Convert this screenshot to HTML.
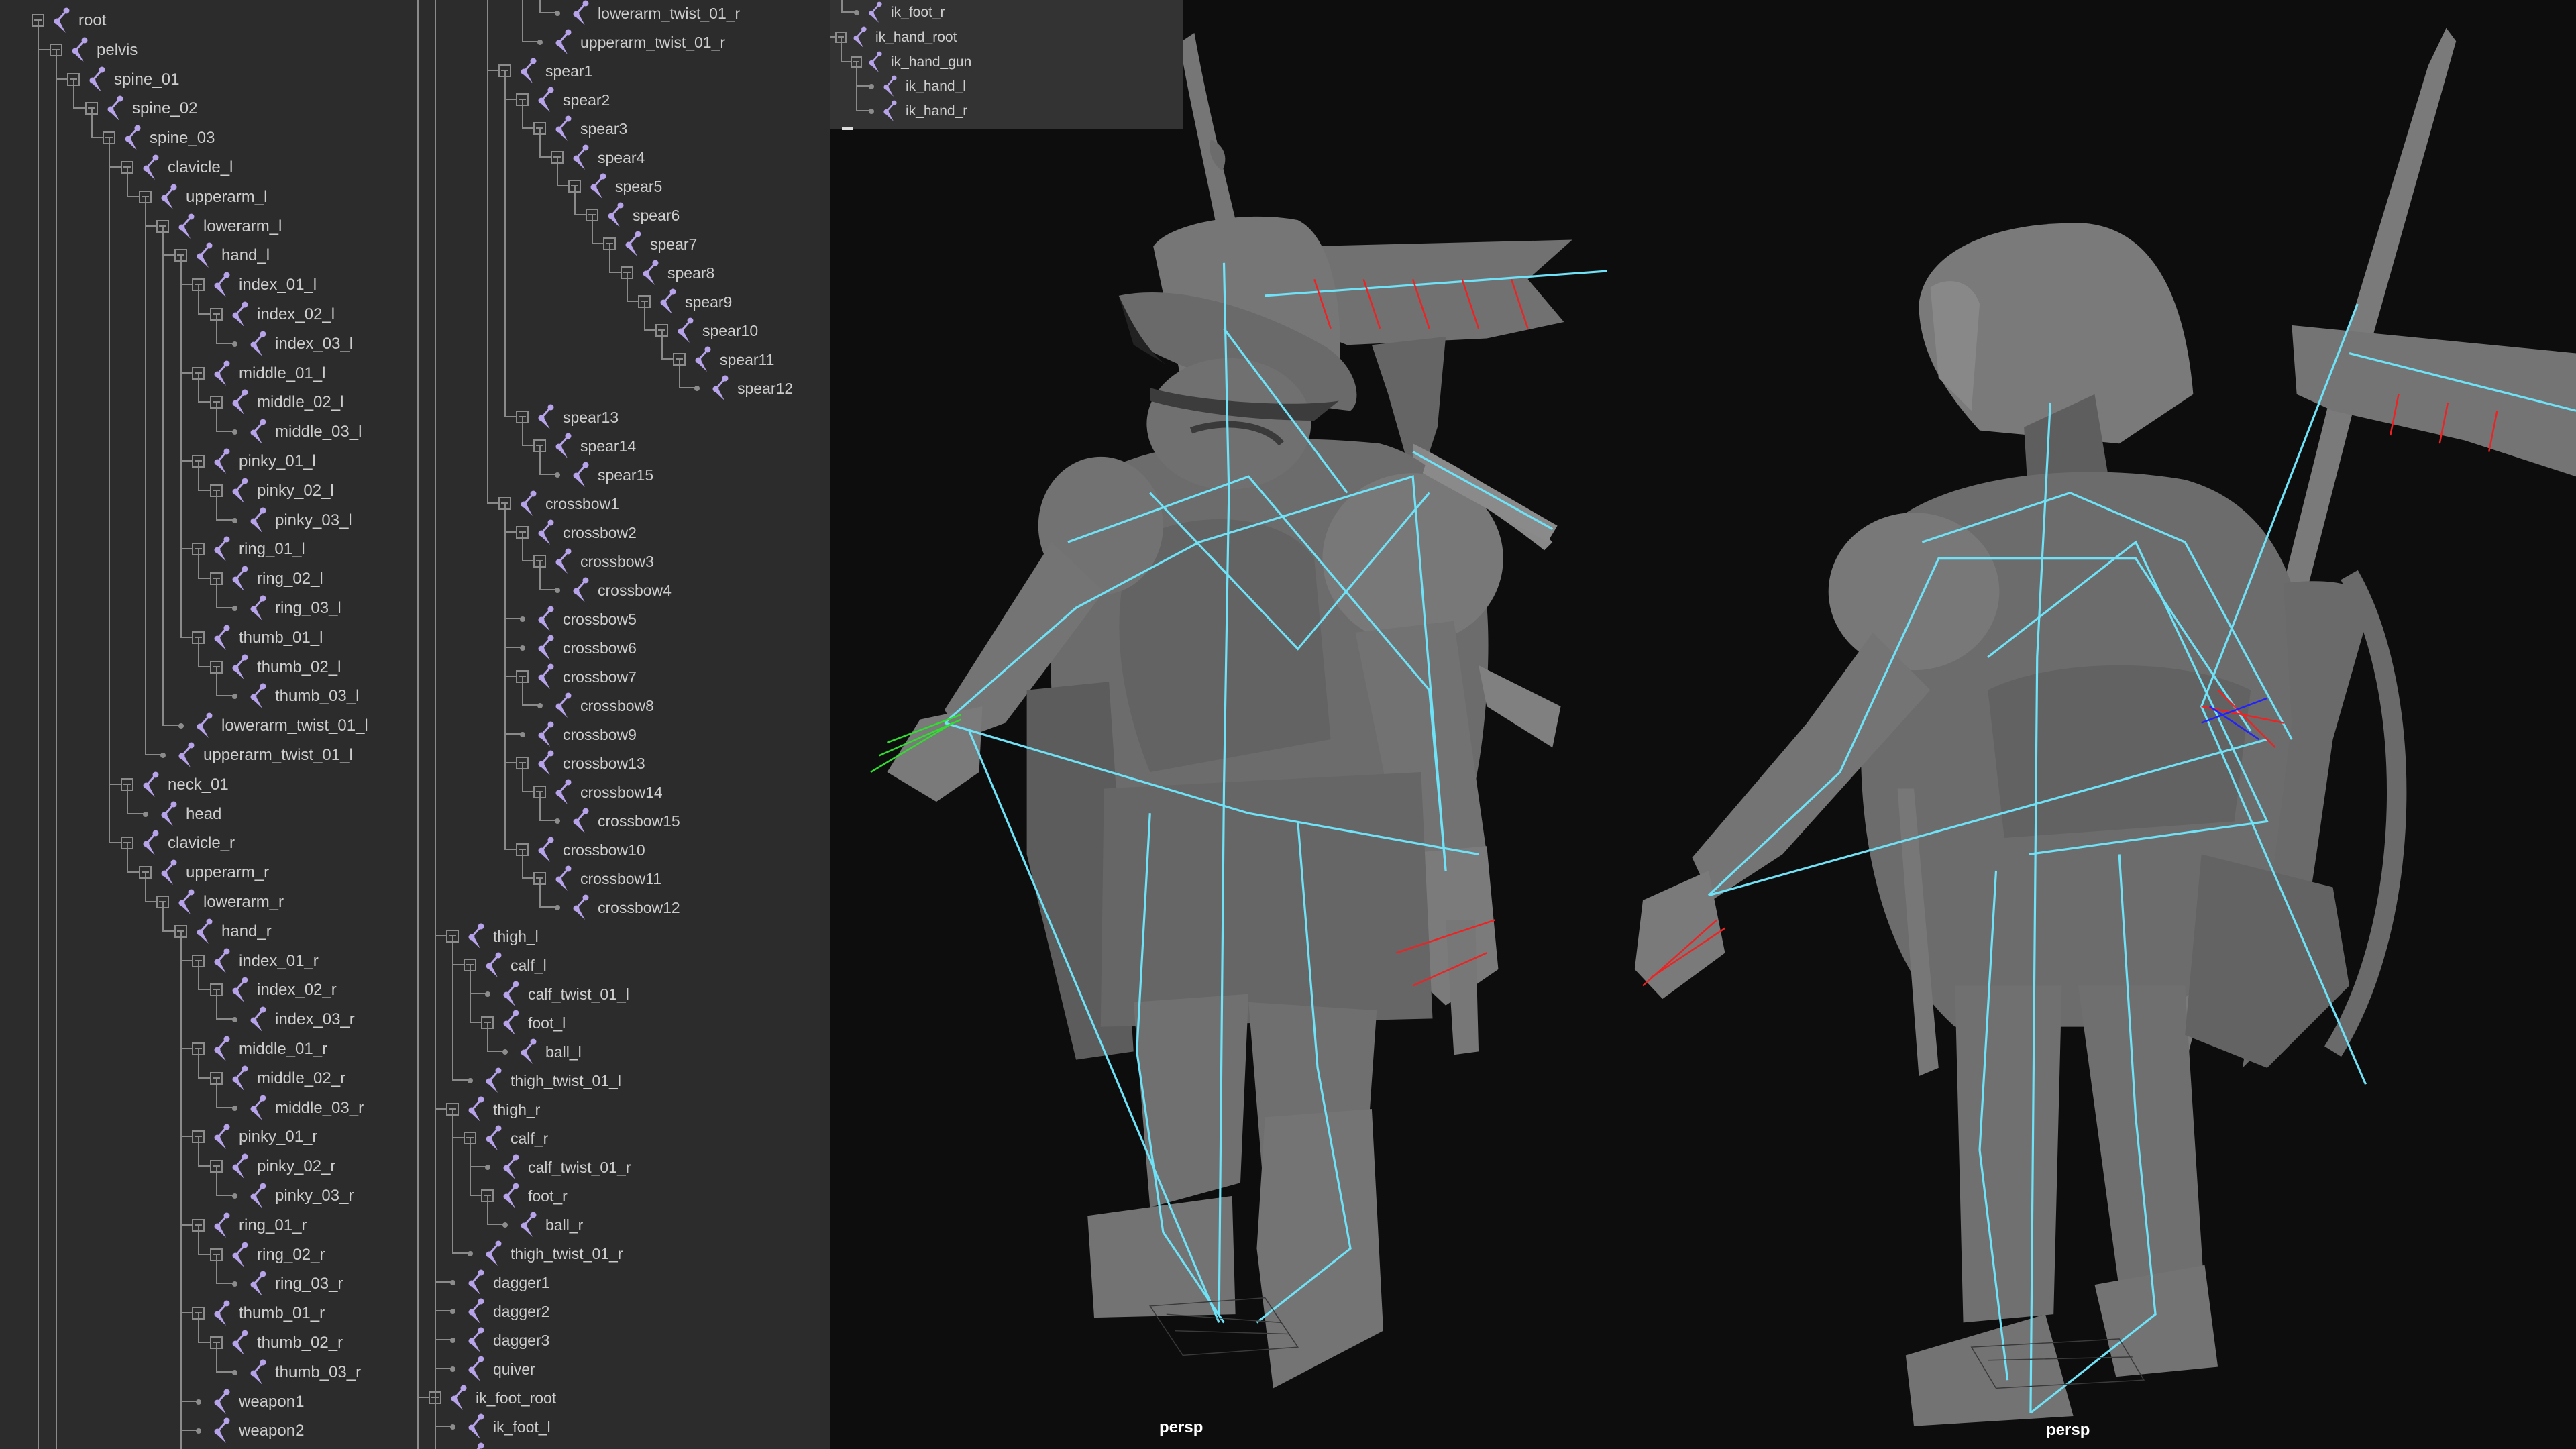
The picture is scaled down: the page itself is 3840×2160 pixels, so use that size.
<!DOCTYPE html>
<html><head><meta charset="utf-8">
<style>
html,body{margin:0;padding:0;width:3840px;height:2160px;overflow:hidden;background:#0d0d0d;font-family:"Liberation Sans",sans-serif}
#scene{position:absolute;left:0;top:0;width:3840px;height:2160px}
.panel{position:absolute;background:#2c2c2c;overflow:hidden}
#p1{left:0;top:0;width:1237px;height:2160px}
#p3{left:1237px;top:0;width:526px;height:193px;background:#333}
.r{position:absolute;height:44px;white-space:nowrap;color:#cdcdcd;font-size:23px;line-height:44px}
.r .b{position:absolute;left:0;top:12px;width:15px;height:15px;border:2px solid #8c8c8c;box-sizing:content-box}
.r .b:after{content:"";position:absolute;left:2px;right:2px;top:6px;height:2px;background:#8c8c8c}
.r .d{position:absolute;left:6px;top:18px;width:8px;height:8px;border-radius:50%;background:#8c8c8c}
.r svg{position:absolute;left:33px;top:1px;width:24px;height:40px}
.r span{position:absolute;left:70px;top:0}
.c1{font-size:24px}
.c3{height:37px;line-height:37px;font-size:21px}
.c3 .b{top:10px;width:13px;height:13px}
.c3 .b:after{top:5px}
.c3 .d{top:15px;left:5px}
.c3 svg{left:27px;top:1px;width:20px;height:34px}
.c3 span{left:60px}
.ln{position:absolute;background:#8a8a8a}
.persp{position:absolute;color:#fff;font-weight:bold;font-size:24px;font-family:"Liberation Sans",sans-serif}
</style></head><body>
<svg width="0" height="0" style="position:absolute">
<defs><symbol id="jt" viewBox="0 0 24 40">
<circle cx="19" cy="6" r="4.5" fill="#b7a3ea"/>
<path d="M19,6 L5,22" stroke="#b7a3ea" stroke-width="3"/>
<circle cx="5" cy="22" r="4.5" fill="#b7a3ea"/>
<path d="M2,24 L8,20 L18,39 Z" fill="#b7a3ea"/>
</symbol></defs></svg>

<svg id="scene" viewBox="0 0 1568 882" preserveAspectRatio="none">
<rect width="1568" height="882" fill="#0d0d0d"/>
<!-- LEFT CHARACTER -->
<g fill="#6c6c6c">
<path d="M718,26 L727,20 C734,60 744,100 754,142 L742,146 C734,104 724,62 718,26Z" fill="#767676"/>
<path d="M737,85 C745,88 748,96 744,104 C738,100 735,92 737,85Z"/>
<path d="M793,150 L957,146 L930,170 L952,196 L905,206 L820,210 L795,200Z" fill="#717171"/>
<path d="M835,210 L880,205 L875,260 L862,300 L845,240Z" fill="#656565"/>
<path d="M860,270 C890,285 915,300 935,320 L945,330 L940,335 C915,315 885,295 860,285Z" fill="#888"/>
<path d="M655,300 C680,270 760,262 840,270 C895,285 910,340 905,420 C900,500 880,560 820,600 L690,610 C660,570 640,500 640,420 C638,360 640,320 655,300Z"/>
<path d="M690,330 C720,310 780,310 800,340 L810,450 L700,470 C680,420 675,370 690,330Z" fill="#636363"/>
<ellipse cx="670" cy="320" rx="38" ry="42" fill="#727272"/>
<ellipse cx="860" cy="340" rx="55" ry="52" fill="#787878"/>
<path d="M640,330 L672,360 L612,440 L585,450 L575,432 Z" fill="#747474"/>
<path d="M560,438 L598,430 L596,470 L570,488 L540,470Z" fill="#7a7a7a"/>
<path d="M625,420 L675,415 L690,640 L655,645 L625,520Z" fill="#5c5c5c"/>
<path d="M825,385 L885,378 L905,520 L855,532Z" fill="#727272"/>
<path d="M850,520 L905,515 L912,590 L880,612 L846,580Z" fill="#7b7b7b"/>
<path d="M880,560 L898,560 L900,640 L885,642Z" fill="#777"/>
<path d="M900,405 L950,430 L945,455 L905,430Z" fill="#808080"/>
<path d="M672,480 L865,470 L872,620 L670,625Z" fill="#666"/>
<path d="M690,610 L760,605 L755,720 L700,735Z" fill="#707070"/>
<path d="M662,740 L750,728 L752,800 L666,802Z" fill="#737373"/>
<path d="M760,610 L838,615 L830,730 L770,735Z" fill="#6f6f6f"/>
<path d="M770,680 L835,675 L842,810 L775,845 L765,760Z" fill="#747474"/>
<path d="M702,150 C712,135 760,128 790,134 C812,145 818,190 815,230 L720,236Z" fill="#767676"/>
<path d="M681,180 C720,172 770,190 805,210 C826,222 830,244 822,250 C780,246 720,226 690,208 Z" fill="#6a6a6a"/>
<path d="M681,180 C690,200 700,215 710,222 L690,210Z" fill="#222"/>
<ellipse cx="748" cy="258" rx="50" ry="40" fill="#707070"/>
<path d="M700,236 C730,245 790,248 815,244 L800,256 C760,256 720,250 700,244Z" fill="#3c3c3c"/>
<path d="M725,262 C745,255 770,258 780,270" stroke="#3a3a3a" stroke-width="4" fill="none"/>
<path d="M870,275 L948,320 L942,330 L866,288Z" fill="#8a8a8a"/>
</g>
<!-- RIGHT CHARACTER -->
<g fill="#6c6c6c">
<path d="M1489,17 L1495,25 L1440,220 L1308,735 L1296,732 L1425,215 L1478,40Z" fill="#7a7a7a"/>
<path d="M1395,198 L1568,215 L1568,290 L1500,268 L1420,250 L1398,240Z" fill="#747474"/>
<path d="M1168,185 C1172,150 1220,134 1270,136 C1310,140 1330,180 1335,240 L1290,270 L1205,262 C1185,240 1168,215 1168,185Z" fill="#7a7a7a"/>
<path d="M1175,175 C1185,168 1200,170 1205,185 L1200,250 L1180,230Z" fill="#888"/>
<path d="M1232,260 L1275,240 L1285,300 L1255,330 L1235,310Z" fill="#5e5e5e"/>
<path d="M1140,330 C1170,290 1260,280 1330,292 C1395,310 1410,380 1402,450 C1395,530 1360,600 1300,625 L1190,625 C1150,590 1130,520 1133,440Z"/>
<path d="M1210,420 C1250,400 1330,400 1370,420 L1360,500 L1220,510Z" fill="#626262"/>
<ellipse cx="1165" cy="360" rx="52" ry="48" fill="#787878"/>
<path d="M1140,385 L1175,420 L1085,520 L1042,548 L1030,522 L1100,440Z" fill="#747474"/>
<path d="M1000,548 L1040,530 L1050,580 L1012,608 L995,590Z" fill="#7a7a7a"/>
<path d="M1155,480 L1165,480 L1180,650 L1168,655Z" fill="#777"/>
<path d="M1190,600 L1255,600 L1250,800 L1195,805Z" fill="#707070"/>
<path d="M1160,825 L1245,800 L1262,862 L1165,868Z" fill="#737373"/>
<path d="M1265,600 L1330,600 L1342,790 L1292,800Z" fill="#6f6f6f"/>
<path d="M1275,782 L1342,770 L1350,832 L1288,838Z" fill="#737373"/>
<path d="M1390,355 C1430,350 1450,360 1440,380 L1420,450 L1410,520 L1395,620 L1365,650 L1380,560 L1395,440Z" fill="#6a6a6a"/>
<path d="M1340,520 L1420,540 L1430,600 L1380,650 L1330,630Z" fill="#636363"/>
<path d="M1430,350 C1470,420 1470,560 1420,640" stroke="#6a6a6a" stroke-width="12" fill="none"/>
</g>
<!-- skeleton lines -->
<g stroke="#6fe2f7" stroke-width="1.3" fill="none">
<polyline points="745,160 748,300 745,480 742,800"/>
<polyline points="575,440 655,370 730,330 860,290 880,530"/>
<polyline points="590,445 742,805"/>
<polyline points="575,440 760,495 900,520"/>
<polyline points="700,495 692,640 708,750 745,805"/>
<polyline points="790,500 802,650 822,760 765,805"/>
<polyline points="770,180 978,165"/>
<polyline points="860,275 945,322"/>
<polyline points="700,300 790,395 870,300"/>
<polyline points="745,200 820,300"/>
<polyline points="650,330 760,290 870,420 880,530"/>
<polyline points="1248,245 1240,400 1236,860"/>
<polyline points="1040,545 1120,470 1180,340 1300,340 1370,445"/>
<polyline points="1435,185 1340,430 1440,660"/>
<polyline points="1215,530 1205,700 1222,840"/>
<polyline points="1290,520 1300,680 1312,800 1236,860"/>
<polyline points="1040,545 1380,450"/>
<polyline points="1430,215 1568,250"/>
<polyline points="1210,400 1300,330 1380,500 1235,520"/>
<polyline points="1170,330 1260,300 1330,330 1395,450"/>
</g>
<g stroke-width="1" fill="none">
<path d="M530,470 L580,440 M535,460 L585,438 M540,452 L585,435" stroke="#2ce02c"/>
<path d="M1000,600 L1045,560 M1005,595 L1050,565" stroke="#e22"/>
<path d="M1340,430 L1390,440 M1350,420 L1385,455" stroke="#e22"/>
<path d="M1340,440 L1380,425 M1345,430 L1375,450" stroke="#22f"/>
<path d="M850,580 L910,560 M860,600 L905,580" stroke="#e22"/>
<path d="M800,170 L810,200 M830,170 L840,200 M860,170 L870,200 M890,170 L900,200 M920,170 L930,200" stroke="#e22"/>
<path d="M1460,240 L1455,265 M1490,245 L1485,270 M1520,250 L1515,275" stroke="#e22"/>
</g>
<g stroke="#3a3a3a" stroke-width="0.6" fill="none">
<path d="M700,795 L770,790 L790,820 L720,825Z M710,800 L780,805 M715,810 L785,812"/>
<path d="M1200,820 L1290,815 L1305,840 L1215,845Z M1210,828 L1298,826"/>
</g>
</svg>

<div class="panel" id="p1">
<div class="r c1" style="left:47px;top:9px"><i class="b"></i><svg><use href="#jt"/></svg><span>root</span></div>
<div class="r c1" style="left:74px;top:53px"><i class="b"></i><svg><use href="#jt"/></svg><span>pelvis</span></div>
<div class="r c1" style="left:100px;top:97px"><i class="b"></i><svg><use href="#jt"/></svg><span>spine_01</span></div>
<div class="r c1" style="left:127px;top:140px"><i class="b"></i><svg><use href="#jt"/></svg><span>spine_02</span></div>
<div class="r c1" style="left:153px;top:184px"><i class="b"></i><svg><use href="#jt"/></svg><span>spine_03</span></div>
<div class="r c1" style="left:180px;top:228px"><i class="b"></i><svg><use href="#jt"/></svg><span>clavicle_l</span></div>
<div class="r c1" style="left:207px;top:272px"><i class="b"></i><svg><use href="#jt"/></svg><span>upperarm_l</span></div>
<div class="r c1" style="left:233px;top:316px"><i class="b"></i><svg><use href="#jt"/></svg><span>lowerarm_l</span></div>
<div class="r c1" style="left:260px;top:359px"><i class="b"></i><svg><use href="#jt"/></svg><span>hand_l</span></div>
<div class="r c1" style="left:286px;top:403px"><i class="b"></i><svg><use href="#jt"/></svg><span>index_01_l</span></div>
<div class="r c1" style="left:313px;top:447px"><i class="b"></i><svg><use href="#jt"/></svg><span>index_02_l</span></div>
<div class="r c1" style="left:340px;top:491px"><i class="d"></i><svg><use href="#jt"/></svg><span>index_03_l</span></div>
<div class="r c1" style="left:286px;top:535px"><i class="b"></i><svg><use href="#jt"/></svg><span>middle_01_l</span></div>
<div class="r c1" style="left:313px;top:578px"><i class="b"></i><svg><use href="#jt"/></svg><span>middle_02_l</span></div>
<div class="r c1" style="left:340px;top:622px"><i class="d"></i><svg><use href="#jt"/></svg><span>middle_03_l</span></div>
<div class="r c1" style="left:286px;top:666px"><i class="b"></i><svg><use href="#jt"/></svg><span>pinky_01_l</span></div>
<div class="r c1" style="left:313px;top:710px"><i class="b"></i><svg><use href="#jt"/></svg><span>pinky_02_l</span></div>
<div class="r c1" style="left:340px;top:754px"><i class="d"></i><svg><use href="#jt"/></svg><span>pinky_03_l</span></div>
<div class="r c1" style="left:286px;top:797px"><i class="b"></i><svg><use href="#jt"/></svg><span>ring_01_l</span></div>
<div class="r c1" style="left:313px;top:841px"><i class="b"></i><svg><use href="#jt"/></svg><span>ring_02_l</span></div>
<div class="r c1" style="left:340px;top:885px"><i class="d"></i><svg><use href="#jt"/></svg><span>ring_03_l</span></div>
<div class="r c1" style="left:286px;top:929px"><i class="b"></i><svg><use href="#jt"/></svg><span>thumb_01_l</span></div>
<div class="r c1" style="left:313px;top:973px"><i class="b"></i><svg><use href="#jt"/></svg><span>thumb_02_l</span></div>
<div class="r c1" style="left:340px;top:1016px"><i class="d"></i><svg><use href="#jt"/></svg><span>thumb_03_l</span></div>
<div class="r c1" style="left:260px;top:1060px"><i class="d"></i><svg><use href="#jt"/></svg><span>lowerarm_twist_01_l</span></div>
<div class="r c1" style="left:233px;top:1104px"><i class="d"></i><svg><use href="#jt"/></svg><span>upperarm_twist_01_l</span></div>
<div class="r c1" style="left:180px;top:1148px"><i class="b"></i><svg><use href="#jt"/></svg><span>neck_01</span></div>
<div class="r c1" style="left:207px;top:1192px"><i class="d"></i><svg><use href="#jt"/></svg><span>head</span></div>
<div class="r c1" style="left:180px;top:1235px"><i class="b"></i><svg><use href="#jt"/></svg><span>clavicle_r</span></div>
<div class="r c1" style="left:207px;top:1279px"><i class="b"></i><svg><use href="#jt"/></svg><span>upperarm_r</span></div>
<div class="r c1" style="left:233px;top:1323px"><i class="b"></i><svg><use href="#jt"/></svg><span>lowerarm_r</span></div>
<div class="r c1" style="left:260px;top:1367px"><i class="b"></i><svg><use href="#jt"/></svg><span>hand_r</span></div>
<div class="r c1" style="left:286px;top:1411px"><i class="b"></i><svg><use href="#jt"/></svg><span>index_01_r</span></div>
<div class="r c1" style="left:313px;top:1454px"><i class="b"></i><svg><use href="#jt"/></svg><span>index_02_r</span></div>
<div class="r c1" style="left:340px;top:1498px"><i class="d"></i><svg><use href="#jt"/></svg><span>index_03_r</span></div>
<div class="r c1" style="left:286px;top:1542px"><i class="b"></i><svg><use href="#jt"/></svg><span>middle_01_r</span></div>
<div class="r c1" style="left:313px;top:1586px"><i class="b"></i><svg><use href="#jt"/></svg><span>middle_02_r</span></div>
<div class="r c1" style="left:340px;top:1630px"><i class="d"></i><svg><use href="#jt"/></svg><span>middle_03_r</span></div>
<div class="r c1" style="left:286px;top:1673px"><i class="b"></i><svg><use href="#jt"/></svg><span>pinky_01_r</span></div>
<div class="r c1" style="left:313px;top:1717px"><i class="b"></i><svg><use href="#jt"/></svg><span>pinky_02_r</span></div>
<div class="r c1" style="left:340px;top:1761px"><i class="d"></i><svg><use href="#jt"/></svg><span>pinky_03_r</span></div>
<div class="r c1" style="left:286px;top:1805px"><i class="b"></i><svg><use href="#jt"/></svg><span>ring_01_r</span></div>
<div class="r c1" style="left:313px;top:1849px"><i class="b"></i><svg><use href="#jt"/></svg><span>ring_02_r</span></div>
<div class="r c1" style="left:340px;top:1892px"><i class="d"></i><svg><use href="#jt"/></svg><span>ring_03_r</span></div>
<div class="r c1" style="left:286px;top:1936px"><i class="b"></i><svg><use href="#jt"/></svg><span>thumb_01_r</span></div>
<div class="r c1" style="left:313px;top:1980px"><i class="b"></i><svg><use href="#jt"/></svg><span>thumb_02_r</span></div>
<div class="r c1" style="left:340px;top:2024px"><i class="d"></i><svg><use href="#jt"/></svg><span>thumb_03_r</span></div>
<div class="r c1" style="left:286px;top:2068px"><i class="d"></i><svg><use href="#jt"/></svg><span>weapon1</span></div>
<div class="r c1" style="left:286px;top:2111px"><i class="d"></i><svg><use href="#jt"/></svg><span>weapon2</span></div>
<div class="r c2" style="left:821px;top:-2px"><i class="d"></i><svg><use href="#jt"/></svg><span>lowerarm_twist_01_r</span></div>
<div class="r c2" style="left:795px;top:41px"><i class="d"></i><svg><use href="#jt"/></svg><span>upperarm_twist_01_r</span></div>
<div class="r c2" style="left:743px;top:84px"><i class="b"></i><svg><use href="#jt"/></svg><span>spear1</span></div>
<div class="r c2" style="left:769px;top:127px"><i class="b"></i><svg><use href="#jt"/></svg><span>spear2</span></div>
<div class="r c2" style="left:795px;top:170px"><i class="b"></i><svg><use href="#jt"/></svg><span>spear3</span></div>
<div class="r c2" style="left:821px;top:213px"><i class="b"></i><svg><use href="#jt"/></svg><span>spear4</span></div>
<div class="r c2" style="left:847px;top:256px"><i class="b"></i><svg><use href="#jt"/></svg><span>spear5</span></div>
<div class="r c2" style="left:873px;top:299px"><i class="b"></i><svg><use href="#jt"/></svg><span>spear6</span></div>
<div class="r c2" style="left:899px;top:342px"><i class="b"></i><svg><use href="#jt"/></svg><span>spear7</span></div>
<div class="r c2" style="left:925px;top:385px"><i class="b"></i><svg><use href="#jt"/></svg><span>spear8</span></div>
<div class="r c2" style="left:951px;top:428px"><i class="b"></i><svg><use href="#jt"/></svg><span>spear9</span></div>
<div class="r c2" style="left:977px;top:471px"><i class="b"></i><svg><use href="#jt"/></svg><span>spear10</span></div>
<div class="r c2" style="left:1003px;top:514px"><i class="b"></i><svg><use href="#jt"/></svg><span>spear11</span></div>
<div class="r c2" style="left:1029px;top:557px"><i class="d"></i><svg><use href="#jt"/></svg><span>spear12</span></div>
<div class="r c2" style="left:769px;top:600px"><i class="b"></i><svg><use href="#jt"/></svg><span>spear13</span></div>
<div class="r c2" style="left:795px;top:643px"><i class="b"></i><svg><use href="#jt"/></svg><span>spear14</span></div>
<div class="r c2" style="left:821px;top:686px"><i class="d"></i><svg><use href="#jt"/></svg><span>spear15</span></div>
<div class="r c2" style="left:743px;top:729px"><i class="b"></i><svg><use href="#jt"/></svg><span>crossbow1</span></div>
<div class="r c2" style="left:769px;top:772px"><i class="b"></i><svg><use href="#jt"/></svg><span>crossbow2</span></div>
<div class="r c2" style="left:795px;top:815px"><i class="b"></i><svg><use href="#jt"/></svg><span>crossbow3</span></div>
<div class="r c2" style="left:821px;top:858px"><i class="d"></i><svg><use href="#jt"/></svg><span>crossbow4</span></div>
<div class="r c2" style="left:769px;top:901px"><i class="d"></i><svg><use href="#jt"/></svg><span>crossbow5</span></div>
<div class="r c2" style="left:769px;top:944px"><i class="d"></i><svg><use href="#jt"/></svg><span>crossbow6</span></div>
<div class="r c2" style="left:769px;top:987px"><i class="b"></i><svg><use href="#jt"/></svg><span>crossbow7</span></div>
<div class="r c2" style="left:795px;top:1030px"><i class="d"></i><svg><use href="#jt"/></svg><span>crossbow8</span></div>
<div class="r c2" style="left:769px;top:1073px"><i class="d"></i><svg><use href="#jt"/></svg><span>crossbow9</span></div>
<div class="r c2" style="left:769px;top:1116px"><i class="b"></i><svg><use href="#jt"/></svg><span>crossbow13</span></div>
<div class="r c2" style="left:795px;top:1159px"><i class="b"></i><svg><use href="#jt"/></svg><span>crossbow14</span></div>
<div class="r c2" style="left:821px;top:1202px"><i class="d"></i><svg><use href="#jt"/></svg><span>crossbow15</span></div>
<div class="r c2" style="left:769px;top:1245px"><i class="b"></i><svg><use href="#jt"/></svg><span>crossbow10</span></div>
<div class="r c2" style="left:795px;top:1288px"><i class="b"></i><svg><use href="#jt"/></svg><span>crossbow11</span></div>
<div class="r c2" style="left:821px;top:1331px"><i class="d"></i><svg><use href="#jt"/></svg><span>crossbow12</span></div>
<div class="r c2" style="left:665px;top:1374px"><i class="b"></i><svg><use href="#jt"/></svg><span>thigh_l</span></div>
<div class="r c2" style="left:691px;top:1417px"><i class="b"></i><svg><use href="#jt"/></svg><span>calf_l</span></div>
<div class="r c2" style="left:717px;top:1460px"><i class="d"></i><svg><use href="#jt"/></svg><span>calf_twist_01_l</span></div>
<div class="r c2" style="left:717px;top:1503px"><i class="b"></i><svg><use href="#jt"/></svg><span>foot_l</span></div>
<div class="r c2" style="left:743px;top:1546px"><i class="d"></i><svg><use href="#jt"/></svg><span>ball_l</span></div>
<div class="r c2" style="left:691px;top:1589px"><i class="d"></i><svg><use href="#jt"/></svg><span>thigh_twist_01_l</span></div>
<div class="r c2" style="left:665px;top:1632px"><i class="b"></i><svg><use href="#jt"/></svg><span>thigh_r</span></div>
<div class="r c2" style="left:691px;top:1675px"><i class="b"></i><svg><use href="#jt"/></svg><span>calf_r</span></div>
<div class="r c2" style="left:717px;top:1718px"><i class="d"></i><svg><use href="#jt"/></svg><span>calf_twist_01_r</span></div>
<div class="r c2" style="left:717px;top:1761px"><i class="b"></i><svg><use href="#jt"/></svg><span>foot_r</span></div>
<div class="r c2" style="left:743px;top:1804px"><i class="d"></i><svg><use href="#jt"/></svg><span>ball_r</span></div>
<div class="r c2" style="left:691px;top:1847px"><i class="d"></i><svg><use href="#jt"/></svg><span>thigh_twist_01_r</span></div>
<div class="r c2" style="left:665px;top:1890px"><i class="d"></i><svg><use href="#jt"/></svg><span>dagger1</span></div>
<div class="r c2" style="left:665px;top:1933px"><i class="d"></i><svg><use href="#jt"/></svg><span>dagger2</span></div>
<div class="r c2" style="left:665px;top:1976px"><i class="d"></i><svg><use href="#jt"/></svg><span>dagger3</span></div>
<div class="r c2" style="left:665px;top:2019px"><i class="d"></i><svg><use href="#jt"/></svg><span>quiver</span></div>
<div class="r c2" style="left:639px;top:2062px"><i class="b"></i><svg><use href="#jt"/></svg><span>ik_foot_root</span></div>
<div class="r c2" style="left:665px;top:2105px"><i class="d"></i><svg><use href="#jt"/></svg><span>ik_foot_l</span></div>
<div class="r c2" style="left:665px;top:2148px"><i class="d"></i><svg><use href="#jt"/></svg><span>ik_foot_r</span></div>
</div>

<div class="panel" id="p3">
<div class="r c3" style="left:31px;top:0px"><i class="d"></i><svg><use href="#jt"/></svg><span>ik_foot_r</span></div>
<div class="r c3" style="left:8px;top:37px"><i class="b"></i><svg><use href="#jt"/></svg><span>ik_hand_root</span></div>
<div class="r c3" style="left:31px;top:74px"><i class="b"></i><svg><use href="#jt"/></svg><span>ik_hand_gun</span></div>
<div class="r c3" style="left:53px;top:110px"><i class="d"></i><svg><use href="#jt"/></svg><span>ik_hand_l</span></div>
<div class="r c3" style="left:53px;top:147px"><i class="d"></i><svg><use href="#jt"/></svg><span>ik_hand_r</span></div>
</div>
<div style="position:absolute;left:1255px;top:190px;width:16px;height:4px;background:#ddd"></div>

<div class="persp" style="left:1728px;top:2114px">persp</div>
<div class="persp" style="left:3050px;top:2118px">persp</div>

<script>
(function(){
 function line(par,x,y,w,h){var d=document.createElement('div');d.className='ln';d.style.left=x+'px';d.style.top=y+'px';d.style.width=w+'px';d.style.height=h+'px';par.insertBefore(d,par.firstChild);}
 var cfg=[{s:'.c1',ind:26.6,bc:9.5,mid:21,p:'p1'},{s:'.c2',ind:26,bc:9.5,mid:21,p:'p1'},{s:'.c3',ind:22,bc:8.5,mid:18,p:'p3'}];
 cfg.forEach(function(c){
  var par=document.getElementById(c.p);
  var rows=[].slice.call(document.querySelectorAll(c.s)).map(function(e){return {L:parseFloat(e.style.left),T:parseFloat(e.style.top),leaf:!!e.querySelector('.d')};});
  rows.forEach(function(r,i){
   var y=r.T+c.mid, px=null, py=0;
   for(var j=i-1;j>=0;j--){ if(rows[j].L<r.L-c.ind/2){ if(Math.abs(rows[j].L-(r.L-c.ind))<6){px=rows[j].L+c.bc;py=rows[j].T+c.mid;} break;} }
   if(px===null){px=r.L-c.ind+c.bc;py=0;}
   if(!(c.s=='.c1'&&i==0)){ line(par,Math.round(px-1),Math.round(py),2,Math.round(y-py+1)); line(par,Math.round(px-1),Math.round(y-1),Math.round(r.L+(r.leaf?6:0)-px+1),2);}
  });
 });
 var p1=document.getElementById('p1');
 line(p1,56,31,2,2129);line(p1,83,75,2,2085);line(p1,269,1389,2,771);
 line(p1,622,0,2,2160);line(p1,648,0,2,2160);
})();
</script>
</body></html>
